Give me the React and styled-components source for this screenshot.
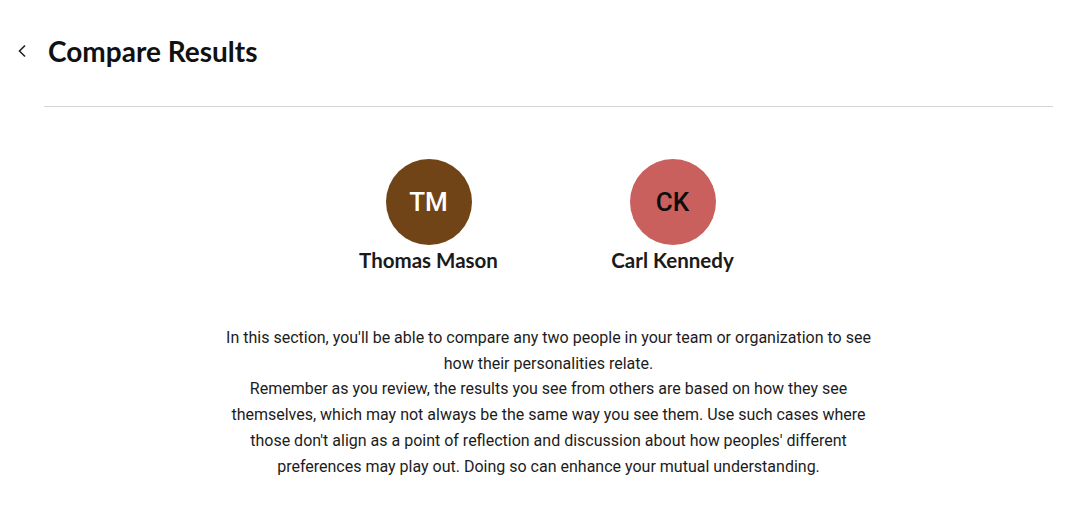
import React from "react"
import styled, { createGlobalStyle } from "styled-components"

const GlobalStyle = createGlobalStyle`
  html, body {
    margin: 0;
    padding: 0;
    background: #ffffff;
  }
  body {
    font-family: Roboto, "Liberation Sans", sans-serif;
    color: #1f1f1f;
  }
`

const Page = styled.div`
  width: 1084px;
  height: 512px;
  box-sizing: border-box;
  padding: 0 31px 0 0;
  overflow: hidden;
`

const Header = styled.header`
  display: flex;
  align-items: center;
  height: 106px;
  box-sizing: border-box;
  padding: 0 0 4px 14px;
  gap: 18px;
`

const BackButton = styled.button`
  display: flex;
  align-items: center;
  justify-content: center;
  width: 16px;
  height: 16px;
  padding: 0;
  border: 0;
  background: transparent;
  color: #222;
  cursor: pointer;
`

const Title = styled.h1`
  margin: 0;
  font-family: Lato, "DejaVu Sans", sans-serif;
  font-size: 28px;
  font-weight: 700;
  color: #111;
`

const Divider = styled.hr`
  margin: 0 0 0 44px;
  border: 0;
  border-top: 1px solid #d6d6d6;
`

const Content = styled.main`
  margin-left: 44px;
  display: flex;
  flex-direction: column;
  align-items: center;
`

const People = styled.div`
  display: flex;
  gap: 44px;
  margin-top: 52px;
  transform: translateX(2px);
`

const Person = styled.div`
  width: 200px;
  display: flex;
  flex-direction: column;
  align-items: center;
`

const Avatar = styled.div`
  width: 86px;
  height: 86px;
  border-radius: 50%;
  background: ${props => props.bg};
  color: ${props => props.fg};
  display: flex;
  align-items: center;
  justify-content: center;
  font-family: Roboto, "Liberation Sans", sans-serif;
  font-size: 26px;
  font-weight: 500;
`

const Name = styled.div`
  margin-top: 3px;
  font-family: Lato, "DejaVu Sans", sans-serif;
  font-size: 20.5px;
  font-weight: 700;
  color: #1a1a1a;
`

const Description = styled.div`
  margin-top: 53px;
  width: 660px;
  text-align: center;
  font-size: 16px;
  line-height: 25.7px;
  color: #1c1c1c;
`

const people = [
  { id: "tm", initials: "TM", name: "Thomas Mason", bg: "#704416", fg: "#ffffff" },
  { id: "ck", initials: "CK", name: "Carl Kennedy", bg: "#c9605e", fg: "#0d0d0d" },
]

const App = () => (
  <Page>
    <GlobalStyle />
    <Header>
      <BackButton aria-label="back">
        <svg width="12" height="14" viewBox="0 0 12 14" fill="none">
          <path d="M9 1.5L3.5 7L9 12.5" stroke="currentColor" strokeWidth="1.6" />
        </svg>
      </BackButton>
      <Title>Compare Results</Title>
    </Header>
    <Divider />
    <Content>
      <People>
        {people.map(({ id, initials, name, bg, fg }) => (
          <Person key={id}>
            <Avatar bg={bg} fg={fg}>{initials}</Avatar>
            <Name>{name}</Name>
          </Person>
        ))}
      </People>
      <Description>
        In this section, you'll be able to compare any two people in your team or organization to see how their personalities relate.
        <br />
        Remember as you review, the results you see from others are based on how they see themselves, which may not always be the same way you see them. Use such cases where those don't align as a point of reflection and discussion about how peoples' different preferences may play out. Doing so can enhance your mutual understanding.
      </Description>
    </Content>
  </Page>
)

export default App
